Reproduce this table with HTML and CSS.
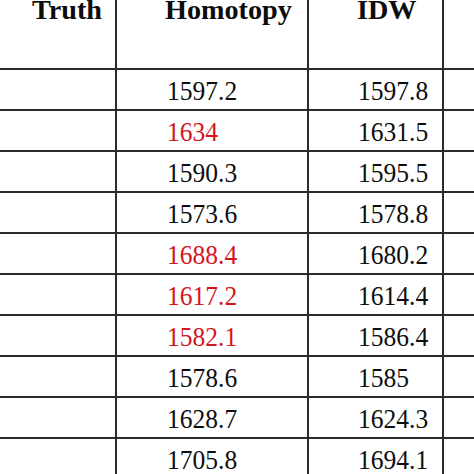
FILE: index.html
```html
<!DOCTYPE html>
<html>
<head>
<meta charset="utf-8">
<link rel="stylesheet" href="styles.css">
</head>
<body>
<div class="table">
  <div class="cell head c1">Truth</div>
  <div class="cell head c2">Homotopy</div>
  <div class="cell head c3">IDW</div>
  <div class="cell head c4"></div>

  <div class="cell c1"></div><div class="cell c2"><span class="num">1597.2</span></div><div class="cell c3"><span class="num">1597.8</span></div><div class="cell c4"></div>
  <div class="cell c1"></div><div class="cell c2 red"><span class="num">1634</span></div><div class="cell c3"><span class="num">1631.5</span></div><div class="cell c4"></div>
  <div class="cell c1"></div><div class="cell c2"><span class="num">1590.3</span></div><div class="cell c3"><span class="num">1595.5</span></div><div class="cell c4"></div>
  <div class="cell c1"></div><div class="cell c2"><span class="num">1573.6</span></div><div class="cell c3"><span class="num">1578.8</span></div><div class="cell c4"></div>
  <div class="cell c1"></div><div class="cell c2 red"><span class="num">1688.4</span></div><div class="cell c3"><span class="num">1680.2</span></div><div class="cell c4"></div>
  <div class="cell c1"></div><div class="cell c2 red"><span class="num">1617.2</span></div><div class="cell c3"><span class="num">1614.4</span></div><div class="cell c4"></div>
  <div class="cell c1"></div><div class="cell c2 red"><span class="num">1582.1</span></div><div class="cell c3"><span class="num">1586.4</span></div><div class="cell c4"></div>
  <div class="cell c1"></div><div class="cell c2"><span class="num">1578.6</span></div><div class="cell c3"><span class="num">1585</span></div><div class="cell c4"></div>
  <div class="cell c1"></div><div class="cell c2"><span class="num">1628.7</span></div><div class="cell c3"><span class="num">1624.3</span></div><div class="cell c4"></div>
  <div class="cell c1"></div><div class="cell c2"><span class="num">1705.8</span></div><div class="cell c3"><span class="num">1694.1</span></div><div class="cell c4"></div>
</div>
</body>
</html>
```

FILE: styles.css
```css
html, body {
  margin: 0;
  padding: 0;
  background: #ffffff;
  overflow: hidden;
}
body {
  width: 474px;
  height: 474px;
  font-family: "Liberation Serif", "Times New Roman", serif;
  color: #0d0d0d;
}
.table {
  display: grid;
  grid-template-columns: 117px 192px 135px 60px;
  grid-template-rows: 70px;
  grid-auto-rows: 41px;
}
.cell {
  box-sizing: border-box;
  border-bottom: 2px solid #2b2b2b;
  border-right: 2px solid #2b2b2b;
  font-size: 25.5px;
  line-height: 37px;
  padding-top: 2px;
  white-space: nowrap;
}
.num {
  display: inline-block;
  transform: scaleY(1.1);
  transform-origin: 50% 50%;
}
.head {
  font-weight: bold;
  font-size: 28.2px;
  line-height: 19px;
  padding-top: 0;
}
.c1 {
  text-align: right;
  padding-right: 13px;
}
.c2 {
  padding-left: 50px;
}
.c3 {
  padding-left: 49px;
}
.c2.head {
  padding-left: 48px;
}
.c3.head {
  padding-left: 48px;
}
.c4 {
  border-right: none;
}
.red {
  color: #d4141c;
}
```
